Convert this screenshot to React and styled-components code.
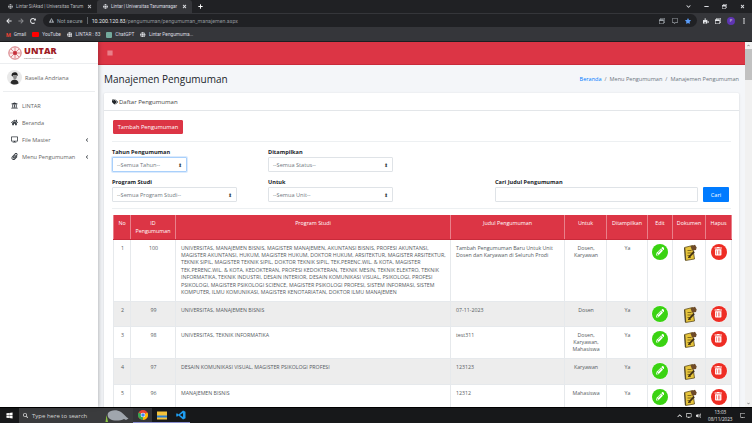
import React from "react";
import styled, { createGlobalStyle } from "styled-components";
import {
  FaUniversity,
  FaHome,
  FaDesktop,
  FaPaperclip,
  FaTags,
  FaBars,
  FaChevronLeft,
  FaPencilAlt,
  FaWindows,
  FaSearch,
  FaPuzzlePiece,
  FaStar,
  FaExclamationTriangle,
  FaGlobe,
  FaArrowLeft,
  FaArrowRight,
  FaRedoAlt,
  FaTimes,
  FaPlus,
  FaChevronDown,
  FaChevronUp,
  FaRegCommentAlt,
  FaVolumeUp,
  FaEllipsisV,
  FaRegWindowRestore,
  FaMinus,
  FaTrashAlt,
} from "react-icons/fa";

const rows = [
  {
    no: 1,
    id: 100,
    prodi:
      "UNIVERSITAS, MANAJEMEN BISNIS, MAGISTER MANAJEMEN, AKUNTANSI BISNIS, PROFESI AKUNTANSI, MAGISTER AKUNTANSI, HUKUM, MAGISTER HUKUM, DOKTOR HUKUM, ARSITEKTUR, MAGISTER ARSITEKTUR, TEKNIK SIPIL, MAGISTER TEKNIK SIPIL, DOKTOR TEKNIK SIPIL, TEK.PERENC.WIL. & KOTA, MAGISTER TEK.PERENC.WIL. & KOTA, KEDOKTERAN, PROFESI KEDOKTERAN, TEKNIK MESIN, TEKNIK ELEKTRO, TEKNIK INFORMATIKA, TEKNIK INDUSTRI, DESAIN INTERIOR, DESAIN KOMUNIKASI VISUAL, PSIKOLOGI, PROFESI PSIKOLOGI, MAGISTER PSIKOLOGI SCIENCE, MAGISTER PSIKOLOGI PROFESI, SISTEM INFORMASI, SISTEM KOMPUTER, ILMU KOMUNIKASI, MAGISTER KENOTARIATAN, DOKTOR ILMU MANAJEMEN",
    judul: "Tambah Pengumuman Baru Untuk Unit Dosen dan Karyawan di Seluruh Prodi",
    untuk: "Dosen, Karyawan",
    height: 62,
  },
  { no: 2, id: 99, prodi: "UNIVERSITAS, MANAJEMEN BISNIS", judul: "07-11-2023", untuk: "Dosen", height: 25 },
  { no: 3, id: 98, prodi: "UNIVERSITAS, TEKNIK INFORMATIKA", judul: "test311", untuk: "Dosen, Karyawan, Mahasiswa", height: 32 },
  { no: 4, id: 97, prodi: "DESAIN KOMUNIKASI VISUAL, MAGISTER PSIKOLOGI PROFESI", judul: "123123", untuk: "Karyawan", height: 26 },
  { no: 5, id: 96, prodi: "MANAJEMEN BISNIS", judul: "12312", untuk: "Mahasiswa", height: 26 },
];

const columns = [17, 45, 275, 114, 42, 41, 25, 33, 26];

const GlobalStyle = createGlobalStyle`
  html, body {
    margin: 0;
    height: 100%;
    overflow: hidden;
    background: #fff;
    font-family: "Open Sans", "Noto Sans", sans-serif;
  }
  * { box-sizing: border-box; }
`;

const DocIcon = () => (
  <svg width="15" height="17" viewBox="0 0 15 17">
    <path d="M2.5 3.5 L10.5 1.5 L12.5 15 L3.5 16.5 Z" fill="#e6c43c" stroke="#4a3a10" strokeWidth="0.7" />
    <path d="M2.7 4.5 L3.5 15.5" stroke="#222" strokeWidth="1.4" strokeDasharray="1 1" />
    <path d="M5.5 6.5h4M5.5 9h4.5M5.5 11.5h3M6 13.5h3" stroke="#6b5510" strokeWidth="0.8" />
    <path d="M6.5 12.5l5-5.5 1.3 1.2-5 5.3-1.8.5z" fill="#3d2d14" />
    <path d="M8.5 2.2 L13 0.8 L14.6 3.5 L14 6 L10 6.5 Z" fill="#6e4b2a" />
  </svg>
);

const LogoMark = () => (
  <svg width="14" height="14" viewBox="0 0 14 14">
    <circle cx="7" cy="7" r="6.2" fill="#fbeaea" stroke="#c9585f" strokeWidth="0.8" />
    <path d="M7 1.5v11M1.5 7h11M3 3l8 8M11 3l-8 8" stroke="#d9737a" strokeWidth="0.8" />
    <circle cx="7" cy="7" r="2" fill="#c62f3a" />
  </svg>
);

const UserFace = () => (
  <svg width="15" height="15" viewBox="0 0 15 15">
    <circle cx="7.5" cy="7.5" r="7.5" fill="#e9e9e9" />
    <path d="M4.5 5.5 C4.5 3 6.5 2 8.5 2.3 C10.5 2.6 11 4.5 10.5 6 L10 6 C9.5 4.8 7 4.8 6 5.2 L5.6 6.8 Z" fill="#1f1f1f" />
    <path d="M6 5.2 C7 4.8 9.5 4.8 10 6 C10 8 9 9.4 7.8 9.4 C6.6 9.4 5.8 7.8 6 5.2 Z" fill="#8d8d8d" />
    <path d="M3.5 13 C4 10.5 6 9.5 7.5 9.8 C9.5 9.5 11.5 10.8 11.5 13.4 C9 15 6 15 3.5 13 Z" fill="#2a2a2a" />
  </svg>
);

const ChromeLogo = () => (
  <svg width="10" height="10" viewBox="0 0 20 20">
    <circle cx="10" cy="10" r="10" fill="#ea4335" />
    <path d="M10 10 L1.3 5 A10 10 0 0 0 10 20 Z" fill="#34a853" />
    <path d="M10 10 L10 20 A10 10 0 0 0 18.7 5 Z" fill="#fbbc04" />
    <circle cx="10" cy="10" r="4.6" fill="#fff" />
    <circle cx="10" cy="10" r="3.6" fill="#4285f4" />
  </svg>
);

const VsCode = () => (
  <svg width="10" height="10" viewBox="0 0 20 20">
    <path d="M14 1 L19 3.5 V16.5 L14 19 L5 11 L2 13.5 L0.5 12.5 V7.5 L2 6.5 L5 9 Z M14 6 L8 10 L14 14 Z" fill="#1f9cf0" />
  </svg>
);

const FolderIcon = () => (
  <svg width="10" height="9" viewBox="0 0 20 18">
    <rect y="1" width="20" height="16" fill="#f5c33b" />
    <rect y="9" width="20" height="4" fill="#2a7fd5" />
  </svg>
);

const Manatee = () => (
  <svg width="24" height="13" viewBox="0 0 24 13">
    <path d="M3 4 C6 0.5 12 0.5 16 3 C19 5 21 8 23.5 9.5 L21 11 L19 10 C15 12 8 12 5 10 C3 9 2 6 3 4 Z" fill="#a0a6ad" />
    <path d="M0.5 13 L1.5 6 L3 13 Z" fill="#8cc63f" />
  </svg>
);

const NavItems = [
  { icon: <FaUniversity />, label: "LINTAR" },
  { icon: <FaHome />, label: "Beranda" },
  { icon: <FaDesktop />, label: "File Master", arrow: true },
  { icon: <FaPaperclip />, label: "Menu Pengumuman", arrow: true },
];

export default function App() {
  return (
    <Screen>
      <GlobalStyle />
      <Browser>
        <TabBar>
          <Tab>
            <FaGlobe />
            <TabTitle>Lintar SiAkad | Universitas Tarum</TabTitle>
            <FaTimes />
          </Tab>
          <Tab $active>
            <FaGlobe />
            <TabTitle>Lintar | Universitas Tarumanagar</TabTitle>
            <FaTimes />
          </Tab>
          <NewTab>
            <FaPlus />
          </NewTab>
          <WindowControls>
            <FaChevronDown />
            <FaMinus />
            <FaRegWindowRestore />
            <FaTimes />
          </WindowControls>
        </TabBar>
        <Toolbar>
          <NavButtons>
            <FaArrowLeft />
            <FaArrowRight style={{ opacity: 0.45 }} />
            <FaRedoAlt />
          </NavButtons>
          <Omnibox>
            <FaExclamationTriangle />
            <NotSecure>Not secure</NotSecure>
            <Sep />
            <Url>
              10.200.120.83<span>/pengumuman/pengumuman_manajemen.aspx</span>
            </Url>
            <OmniIcons>
              <FaRegWindowRestore />
              <FaRegCommentAlt />
              <FaStar color="#5a9cf8" />
            </OmniIcons>
          </Omnibox>
          <ToolIcons>
            <FaPuzzlePiece />
            <FaRegWindowRestore />
            <Avatar>P</Avatar>
            <FaEllipsisV />
          </ToolIcons>
        </Toolbar>
        <Bookmarks>
          <Bookmark><Gmail>M</Gmail>Gmail</Bookmark>
          <Bookmark><YouTube />YouTube</Bookmark>
          <Bookmark><FaGlobe />LINTAR : 83</Bookmark>
          <Bookmark><ChatGpt />ChatGPT</Bookmark>
          <Bookmark><FaGlobe />Lintar Pengumuma...</Bookmark>
        </Bookmarks>
      </Browser>

      <Viewport>
        <Sidebar>
          <Brand>
            <LogoMark />
            <BrandText>
              <BrandName>UNTAR</BrandName>
              <BrandSub>Tarumanagara University</BrandSub>
            </BrandText>
          </Brand>
          <UserPanel>
            <UserFace />
            <span>Rasella Andriana</span>
          </UserPanel>
          <Nav>
            {NavItems.map((item) => (
              <NavItem key={item.label}>
                <NavIcon>{item.icon}</NavIcon>
                <NavLabel>{item.label}</NavLabel>
                {item.arrow ? <FaChevronLeft size={4} color="#343a40" /> : null}
              </NavItem>
            ))}
          </Nav>
        </Sidebar>

        <Main>
          <TopBar>
            <FaBars />
          </TopBar>
          <ContentHeader>
            <Title>Manajemen Pengumuman</Title>
            <Breadcrumb>
              <a>Beranda</a>
              <i>/</i>
              <span>Menu Pengumuman</span>
              <i>/</i>
              <span>Manajemen Pengumuman</span>
            </Breadcrumb>
          </ContentHeader>
          <Card>
            <CardHeader>
              <FaTags />
              Daftar Pengumuman
            </CardHeader>
            <CardBody>
              <AddButton>Tambah Pengumuman</AddButton>
              <Divider />
              <FilterGrid>
                <Field>
                  <Label>Tahun Pengumuman</Label>
                  <FakeSelect $width={75} $focused>--Semua Tahun--</FakeSelect>
                </Field>
                <Field>
                  <Label>Ditampilkan</Label>
                  <FakeSelect $width={125}>--Semua Status--</FakeSelect>
                </Field>
                <div />
                <div />
                <Field>
                  <Label>Program Studi</Label>
                  <FakeSelect $width={125}>--Semua Program Studi--</FakeSelect>
                </Field>
                <Field>
                  <Label>Untuk</Label>
                  <FakeSelect $width={125}>--Semua Unit--</FakeSelect>
                </Field>
                <Field>
                  <Label>Cari Judul Pengumuman</Label>
                  <SearchInput />
                </Field>
                <SearchButton>Cari</SearchButton>
              </FilterGrid>
              <TableDivider />
              <Table>
                <colgroup>
                  {columns.map((w, i) => (
                    <col key={i} width={w} />
                  ))}
                </colgroup>
                <thead>
                  <tr>
                    <th>No</th>
                    <th>ID Pengumuman</th>
                    <th>Program Studi</th>
                    <th>Judul Pengumuman</th>
                    <th>Untuk</th>
                    <th>Ditampilkan</th>
                    <th>Edit</th>
                    <th>Dokumen</th>
                    <th>Hapus</th>
                  </tr>
                </thead>
                <tbody>
                  {rows.map((row) => (
                    <Row key={row.no} $height={row.height}>
                      <Centered>{row.no}</Centered>
                      <Centered>{row.id}</Centered>
                      <td>{row.prodi}</td>
                      <td>{row.judul}</td>
                      <Centered>{row.untuk}</Centered>
                      <Centered>Ya</Centered>
                      <IconCell>
                        <RoundIcon $color="#3ad312"><FaPencilAlt /></RoundIcon>
                      </IconCell>
                      <IconCell>
                        <DocWrap><DocIcon /></DocWrap>
                      </IconCell>
                      <IconCell>
                        <RoundIcon $color="#ee2d24"><FaTrashAlt /></RoundIcon>
                      </IconCell>
                    </Row>
                  ))}
                </tbody>
              </Table>
            </CardBody>
          </Card>
        </Main>

        <Scrollbar>
          <FaChevronUp />
          <ScrollTrack>
            <ScrollThumb />
          </ScrollTrack>
          <FaChevronDown />
        </Scrollbar>
      </Viewport>

      <Taskbar>
        <StartButton><FaWindows /></StartButton>
        <SearchBox>
          <FaSearch />
          <span>Type here to search</span>
          <Manatee />
        </SearchBox>
        <TaskApp $active><ChromeLogo /></TaskApp>
        <TaskApp><FolderIcon /></TaskApp>
        <TaskApp><VsCode /></TaskApp>
        <Tray>
          <FaChevronUp />
          <FaDesktop />
          <FaVolumeUp />
          <Clock>
            <span>13:03</span>
            <span>08/11/2023</span>
          </Clock>
          <FaRegCommentAlt />
        </Tray>
      </Taskbar>
    </Screen>
  );
}

const Screen = styled.div`
  width: 752px;
  height: 423px;
  display: flex;
  flex-direction: column;
  overflow: hidden;
`;

const Browser = styled.header`
  height: 42px;
  flex: none;
  background: #35363a;
  color: #dadce0;
  border-bottom: 1px solid #1d1e20;
`;

const TabBar = styled.div`
  height: 13px;
  display: flex;
  padding-left: 2px;
  background: #202124;
  font-size: 5px;
`;

const Tab = styled.div`
  width: 95px;
  display: flex;
  align-items: center;
  gap: 3px;
  padding: 0 5px 0 6px;
  background: ${(p) => (p.$active ? "#35363a" : "transparent")};
  color: ${(p) => (p.$active ? "#dadce0" : "#b4b6ba")};
  border-radius: 3px 3px 0 0;
  svg { flex: none; font-size: 5px; }
`;

const TabTitle = styled.span`
  flex: 1;
  white-space: nowrap;
  font-family: "Roboto", sans-serif;
  font-size: 4.6px;
`;

const NewTab = styled.div`
  display: flex;
  align-items: center;
  padding-left: 6px;
  color: #fff;
  font-size: 5px;
`;

const WindowControls = styled.div`
  margin-left: auto;
  display: flex;
  align-items: center;
  gap: 13px;
  padding-right: 7px;
  font-size: 5px;
`;

const Toolbar = styled.div`
  height: 15px;
  display: flex;
  align-items: center;
  padding-left: 6px;
`;

const NavButtons = styled.div`
  display: flex;
  gap: 6px;
  width: 37px;
  font-size: 6px;
  color: #e8eaed;
`;

const Omnibox = styled.div`
  width: 654px;
  height: 13px;
  background: #202124;
  border-radius: 7px;
  display: flex;
  align-items: center;
  padding: 0 6px;
  font-family: "Roboto", sans-serif;
  font-size: 5.3px;
  color: #9aa0a6;
  > svg { font-size: 5px; margin-right: 3px; }
`;

const NotSecure = styled.span`
  color: #9aa0a6;
`;

const Sep = styled.span`
  width: 1px;
  height: 7px;
  margin: 0 4px;
  background: #5f6368;
`;

const Url = styled.span`
  color: #e8eaed;
  span { color: #8f9499; }
`;

const OmniIcons = styled.div`
  margin-left: auto;
  display: flex;
  gap: 7px;
  font-size: 6px;
  color: #9aa0a6;
`;

const ToolIcons = styled.div`
  display: flex;
  align-items: center;
  gap: 6px;
  padding-left: 6px;
  font-size: 6px;
  color: #e8eaed;
`;

const Avatar = styled.span`
  width: 8px;
  height: 8px;
  border-radius: 50%;
  background: #5e35b1;
  font-size: 4px;
  line-height: 8px;
  text-align: center;
`;

const Bookmarks = styled.div`
  height: 13px;
  display: flex;
  align-items: center;
  gap: 6px;
  padding-left: 6px;
  font-family: "Roboto", sans-serif;
  font-size: 4.8px;
`;

const Bookmark = styled.span`
  display: inline-flex;
  align-items: center;
  gap: 3px;
  svg { font-size: 5.5px; }
`;

const Gmail = styled.b`
  color: #ea4335;
  font-size: 5.5px;
`;

const YouTube = styled.i`
  width: 7px;
  height: 5px;
  border-radius: 1px;
  background: #f00;
`;

const ChatGpt = styled.i`
  width: 6px;
  height: 6px;
  border-radius: 1px;
  background: #74aa9c;
`;

const Viewport = styled.div`
  flex: 1;
  min-height: 0;
  display: flex;
`;

const Sidebar = styled.aside`
  width: 98px;
  flex: none;
  background: #fff;
  box-shadow: 1px 0 4px rgba(0, 0, 0, 0.25);
  z-index: 1;
  color: #555;
`;

const Brand = styled.div`
  height: 22px;
  display: flex;
  align-items: center;
  gap: 2px;
  padding-left: 8px;
  border-bottom: 1px solid #eceef0;
`;

const BrandText = styled.div`
  display: flex;
  flex-direction: column;
`;

const BrandName = styled.span`
  font-size: 9px;
  line-height: 12.5px;
  font-weight: 800;
  color: #9e1c26;
  letter-spacing: 0.1px;
`;

const BrandSub = styled.span`
  font-size: 2.5px;
  line-height: 3.5px;
  color: #666;
`;

const UserPanel = styled.div`
  height: 28px;
  margin: 0 3px;
  display: flex;
  align-items: center;
  gap: 3px;
  padding-left: 4px;
  border-bottom: 1px solid #eceef0;
  font-size: 5.6px;
  color: #666;
`;

const Nav = styled.nav`
  padding-top: 5px;
  display: flex;
  flex-direction: column;
`;

const NavItem = styled.div`
  height: 17px;
  display: flex;
  align-items: center;
  padding: 0 9px 0 11px;
  font-size: 5.6px;
  color: #666;
`;

const NavIcon = styled.span`
  width: 10px;
  display: flex;
  font-size: 7px;
  color: #343a40;
`;

const NavLabel = styled.span`
  flex: 1;
  padding-left: 1px;
`;

const Main = styled.main`
  flex: 1;
  min-width: 0;
  background: #f4f6f9;
  overflow: hidden;
`;

const TopBar = styled.div`
  height: 23px;
  background: #dc3545;
  border-bottom: 1px solid #c82a3a;
  display: flex;
  align-items: center;
  padding-left: 9px;
  color: #f6c9ce;
  font-size: 6px;
`;

const ContentHeader = styled.div`
  height: 28px;
  display: flex;
  align-items: center;
  justify-content: space-between;
  padding: 0 6px;
`;

const Title = styled.h1`
  margin: 0;
  font-size: 10px;
  font-weight: 400;
  color: #212529;
`;

const Breadcrumb = styled.div`
  display: flex;
  gap: 3px;
  font-size: 5.55px;
  color: #6c757d;
  a { color: #007bff; }
  i { font-style: normal; }
`;

const Card = styled.section`
  margin: 0 6px;
  background: #fff;
  box-shadow: 0 0 1px rgba(0, 0, 0, 0.15), 0 1px 3px rgba(0, 0, 0, 0.1);
  border-radius: 1px;
`;

const CardHeader = styled.div`
  height: 18px;
  display: flex;
  align-items: center;
  gap: 1px;
  padding-left: 8px;
  border-bottom: 1px solid #e3e6e9;
  font-size: 6px;
  color: #444;
  svg { font-size: 6px; color: #212529; }
`;

const CardBody = styled.div`
  padding: 9px 8px 0 8px;
`;

const AddButton = styled.button`
  display: block;
  width: 70px;
  height: 14px;
  margin-left: 1px;
  padding: 0;
  border: 1px solid #dc3545;
  border-radius: 1px;
  background: #dc3545;
  color: #fff;
  font: inherit;
  font-size: 5.7px;
`;

const Divider = styled.hr`
  margin: 7px 0 6px;
  border: 0;
  border-top: 1px solid #edf0f2;
`;

const TableDivider = styled(Divider)`
  margin: 6px 0 6px;
`;

const FilterGrid = styled.div`
  display: grid;
  grid-template-columns: 156px 227px 208px 26px;
  row-gap: 6px;
  align-items: end;
`;

const Field = styled.div`
  display: flex;
  flex-direction: column;
  gap: 1px;
`;

const Label = styled.label`
  font-size: 5.6px;
  line-height: 8px;
  font-weight: 700;
  color: #212529;
`;

const FakeSelect = styled.div`
  position: relative;
  width: ${(p) => p.$width}px;
  height: 15px;
  line-height: 14px;
  padding-left: 4px;
  font-size: 5.6px;
  color: #6f777e;
  background: #fff;
  border: 1px solid ${(p) => (p.$focused ? "#a9d0fb" : "#dfe3e7")};
  border-radius: 1px;
  box-shadow: ${(p) => (p.$focused ? "0 0 0 1px #dcebfd" : "none")};
  &::after {
    content: "⬍";
    position: absolute;
    right: 4px;
    top: 0;
    font-size: 5px;
    color: #343a40;
  }
`;

const SearchInput = styled.div`
  width: 203px;
  height: 15px;
  background: #fff;
  border: 1px solid #dfe3e7;
  border-radius: 1px;
`;

const SearchButton = styled.button`
  width: 26px;
  height: 15px;
  padding: 0;
  border: 0;
  border-radius: 1px;
  background: #007bff;
  color: #fff;
  font: inherit;
  font-size: 5.7px;
`;

const Table = styled.table`
  width: 618px;
  margin-left: 1px;
  border-collapse: collapse;
  table-layout: fixed;
  font-size: 5.25px;
  line-height: 7.4px;
  color: #555b61;

  th {
    height: 24px;
    padding: 4px 2px 0;
    background: #dc3545;
    color: #fff;
    font-weight: 500;
    font-size: 5.35px;
    line-height: 8px;
    border: 1px solid #e9808a;
    border-top: 0;
    border-bottom: 1px solid #c82a3a;
    vertical-align: top;
  }

  td {
    padding: 5px 4px 2px 5px;
    vertical-align: top;
    border: 1px solid #e6e9ec;
  }
`;

const Row = styled.tr`
  height: ${(p) => p.$height}px;
  &:nth-child(even) { background: #ededed; }
`;

const Centered = styled.td`
  text-align: center;
`;

const IconCell = styled.td`
  && {
    padding: 4px 0 0;
  }
`;

const RoundIcon = styled.div`
  display: flex;
  align-items: center;
  justify-content: center;
  width: 16px;
  height: 16px;
  margin: 0 auto;
  border-radius: 50%;
  background: ${(p) => p.$color};
  box-shadow: 0 0 0 0.5px rgba(255, 255, 255, 0.8);
  color: #fff;
  font-size: 8.5px;
`;

const DocWrap = styled.div`
  display: flex;
  justify-content: center;
`;

const Scrollbar = styled.div`
  width: 7px;
  flex: none;
  background: #f1f1f1;
  display: flex;
  flex-direction: column;
  align-items: center;
  font-size: 3px;
  color: #505050;
  padding: 2px 0;
`;

const ScrollTrack = styled.div`
  flex: 1;
  width: 100%;
  padding-top: 2px;
`;

const ScrollThumb = styled.div`
  height: 31px;
  background: #c1c1c1;
`;

const Taskbar = styled.footer`
  height: 16px;
  flex: none;
  display: flex;
  align-items: stretch;
  background: #17181a;
  color: #e6e6e6;
  border-top: 1px solid #000;
`;

const StartButton = styled.div`
  width: 19px;
  display: flex;
  align-items: center;
  justify-content: center;
  color: #fff;
  font-size: 7px;
`;

const SearchBox = styled.div`
  width: 114px;
  display: flex;
  align-items: center;
  gap: 4px;
  padding-left: 4px;
  background: #3a3b3d;
  font-size: 6px;
  color: #d5d5d5;
  > svg:first-child { font-size: 5px; }
  > svg:last-child { margin-left: auto; margin-right: 4px; }
`;

const TaskApp = styled.div`
  width: 19px;
  display: flex;
  align-items: center;
  justify-content: center;
  background: ${(p) => (p.$active ? "#333437" : "transparent")};
  border-bottom: 1px solid #8a8fd0;
`;

const Tray = styled.div`
  margin-left: auto;
  display: flex;
  align-items: center;
  gap: 4px;
  padding-right: 7px;
  font-size: 5.5px;
`;

const Clock = styled.div`
  display: flex;
  flex-direction: column;
  align-items: center;
  font-size: 4.6px;
  line-height: 6.5px;
  padding: 0 3px;
`;
